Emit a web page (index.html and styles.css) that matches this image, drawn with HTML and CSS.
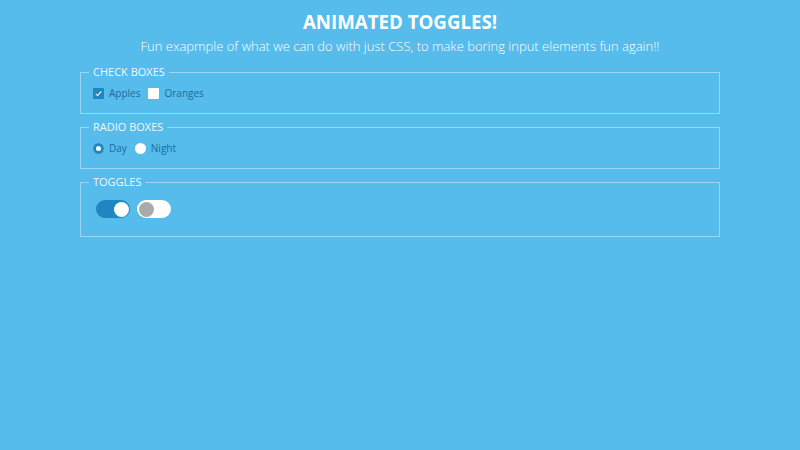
FILE: index.html
```html
<!DOCTYPE html>
<html lang="en">
<head>
  <meta charset="UTF-8" />
  <meta name="viewport" content="width=device-width, initial-scale=1.0"/>
  <title>Animated Toggles</title>
  <link rel="stylesheet" href="styles.css">
</head>
<body>

  <header class="intro">
    <h1>Animated Toggles!</h1>
    <p>Fun exapmple of what we can do with just CSS, to make boring input elements fun again!!</p>
  </header>

  <div class="main">
    <fieldset>
      <legend>Check Boxes</legend>
      <div class="row">
        <label class="check">
          <input type="checkbox" checked>
          <span class="box"></span>
          Apples
        </label>
        <label class="check">
          <input type="checkbox">
          <span class="box"></span>
          Oranges
        </label>
      </div>
    </fieldset>

    <fieldset>
      <legend>Radio Boxes</legend>
      <div class="row">
        <label class="radio">
          <input type="radio" name="time" checked>
          <span class="dot"></span>
          Day
        </label>
        <label class="radio">
          <input type="radio" name="time">
          <span class="dot"></span>
          Night
        </label>
      </div>
    </fieldset>

    <fieldset class="toggles">
      <legend>Toggles</legend>
      <div class="row">
        <label class="toggle">
          <input type="checkbox" checked>
          <span class="track"></span>
        </label>
        <label class="toggle">
          <input type="checkbox">
          <span class="track"></span>
        </label>
      </div>
    </fieldset>
  </div>

</body>
</html>
```

FILE: styles.css
```css
* {
  margin: 0;
  padding: 0;
  box-sizing: border-box;
  font-family: 'Open Sans', 'Noto Sans', sans-serif;
}

body {
  min-height: 100vh;
  background-color: #55bcec;
  padding-top: 10px;
}

.intro {
  text-align: center;
  color: #fff;
}

.intro h1 {
  font-size: 18.7px;
  line-height: 24px;
  font-weight: 700;
  text-transform: uppercase;
}

.intro p {
  font-size: 13px;
  line-height: 18px;
  font-weight: 300;
  margin-top: 3px;
}

.main {
  width: 640px;
  margin: 10px auto 0;
  display: flex;
  flex-direction: column;
  gap: 6px;
}

fieldset {
  border: 1px solid rgba(255, 255, 255, 0.4);
  padding: 7px 12px 13px 8px;
}

legend {
  padding: 0 4px;
  font-size: 11px;
  line-height: 14px;
  color: #eef8fe;
  text-transform: uppercase;
}

.row {
  display: flex;
  align-items: center;
  height: 14px;
  padding-left: 4px;
}

.check,
.radio {
  display: flex;
  align-items: center;
  font-size: 10px;
  color: #1d6c9c;
  margin-right: 8px;
  cursor: pointer;
}

label input {
  display: none;
}

.box,
.dot {
  width: 11px;
  height: 11px;
  margin-right: 5px;
  background: #fff;
  transition: background-color 0.3s;
}

.box {
  border-radius: 1px;
  position: relative;
}

input:checked + .box {
  background: #1f86c2;
}

/* little white tick */
input:checked + .box::after {
  content: '';
  position: absolute;
  left: 4px;
  top: 2px;
  width: 2px;
  height: 5px;
  border: solid #fff;
  border-width: 0 1px 1px 0;
  transform: rotate(40deg);
}

.dot {
  border-radius: 50%;
}

input:checked + .dot {
  background: #1f86c2;
  box-shadow: inset 0 0 0 3px #1f86c2, inset 0 0 0 6px #fff;
}

.toggles {
  padding-top: 11px;
  padding-bottom: 18px;
}

.toggles .row {
  height: 18px;
  padding-left: 7px;
  gap: 7px;
}

.toggle {
  cursor: pointer;
}

.track {
  display: block;
  position: relative;
  width: 34px;
  height: 18px;
  border-radius: 9px;
  background: #fff;
  transition: background-color 0.3s;
}

.track::after {
  content: '';
  position: absolute;
  top: 1.5px;
  left: 1.5px;
  width: 15px;
  height: 15px;
  border-radius: 50%;
  background: #aaa;
  transition: left 0.3s, background-color 0.3s;
}

input:checked + .track {
  background: #1f86c2;
}

input:checked + .track::after {
  left: 17.5px;
  background: #fff;
}
```
